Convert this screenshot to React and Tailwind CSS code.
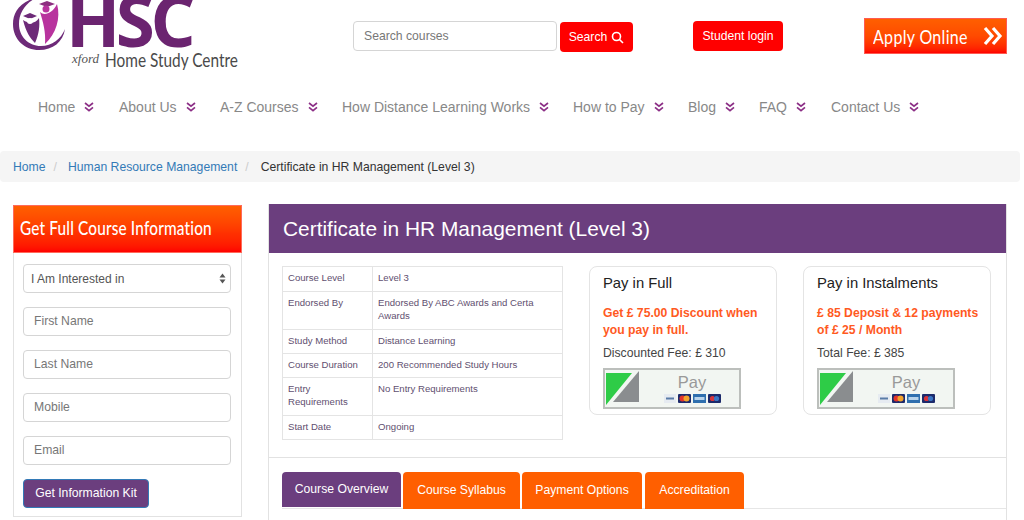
import React from "react";

const navItems = [
  { label: "Home", width: "w-[81px]" },
  { label: "About Us", width: "w-[101px]" },
  { label: "A-Z Courses", width: "w-[122px]" },
  { label: "How Distance Learning Works", width: "w-[231px]" },
  { label: "How to Pay", width: "w-[115px]" },
  { label: "Blog", width: "w-[71px]" },
  { label: "FAQ", width: "w-[72px]" },
  { label: "Contact Us", width: "w-[92px]" },
];

const courseRows = [
  ["Course Level", "Level 3", "h-[25px]"],
  ["Endorsed By", "Endorsed By ABC Awards and Certa Awards", "h-[38px]"],
  ["Study Method", "Distance Learning", "h-[24px]"],
  ["Course Duration", "200 Recommended Study Hours", "h-[24px]"],
  ["Entry Requirements", "No Entry Requirements", "h-[38px]"],
  ["Start Date", "Ongoing", "h-[24px]"],
];

const fieldClass =
  "mt-[14px] flex h-[29px] w-[208px] items-center rounded border border-[#d5d5d5] bg-white px-[10px] text-[12.2px] text-[#777]";

const Chevrons = () => (
  <svg width="10" height="10" viewBox="0 0 10 10" fill="none" stroke="#8c2f86" strokeWidth="1.7">
    <path d="M1 1 L5 4.2 L9 1" />
    <path d="M1 5.4 L5 8.6 L9 5.4" />
  </svg>
);

const LogoMark = () => (
  <svg width="62" height="52" viewBox="0 0 62 52" className="shrink-0">
    <path d="M22 -1 C8 4 3 14 3 24 C3 40 15 50 29 50 C43 50 53 42 55 29 C51 39 42 46 31 46 C18 46 9 36 9 24 C9 14 14 5 24 -1 Z" fill="#6d2a78" />
    <path d="M30 12 C34 16 42 14 47 4 C51 18 46 34 35 44 C36 32 33 22 30 12 Z" fill="#b8339e" />
    <path d="M29 4 L37 1 L45 4 L37 7 Z" fill="#8d2f80" />
    <circle cx="36" cy="9" r="3.5" fill="#b8339e" />
    <path d="M13 20 C16 32 20 38 25 43 C29 34 30 26 29 18 C25 24 19 24 13 20 Z" fill="#6d2a78" />
    <path d="M13 16 L20 13 L27 16 L20 19 Z" fill="#6d2a78" />
    <circle cx="20" cy="21" r="3" fill="#fff" />
  </svg>
);

const PayButton = () => (
  <div className="mt-[6px] flex h-[41px] w-[138px] items-start border-2 border-[#bcbfbc] bg-[#f2f6f2]">
    <svg width="40" height="37" viewBox="0 0 40 37" className="shrink-0">
      <path d="M1 3 H27 L1 35 Z" fill="#2ecc47" />
      <path d="M34 1 V32 H8 Z" fill="#8a8d8f" />
    </svg>
    <div className="flex w-[94px] flex-col items-center">
      <span className="h-[24px] text-[16.5px] leading-[24px] text-[#999]">Pay</span>
      <svg width="57" height="9" viewBox="0 0 57 9">
        <rect x="0" y="0" width="12" height="9" fill="#e6ebf1" />
        <rect x="2" y="3.5" width="8" height="2" fill="#5a7ca8" />
        <rect x="14" y="0" width="13" height="9" rx="1" fill="#1c2a6b" />
        <circle cx="18.5" cy="4.5" r="3" fill="#e2342a" />
        <circle cx="22.5" cy="4.5" r="3" fill="#f3a32b" />
        <rect x="29" y="0" width="13" height="9" fill="#2f6fae" />
        <rect x="30.5" y="3" width="10" height="3" fill="#b9d3ea" />
        <rect x="44" y="0" width="13" height="9" rx="1" fill="#1c2a6b" />
        <circle cx="48.5" cy="4.5" r="2.6" fill="#d8343a" />
        <circle cx="52.5" cy="4.5" r="2.6" fill="#3b76c4" />
      </svg>
    </div>
  </div>
);

const PayCard = ({ title, offer, fee }) => (
  <div className="ml-[26px] h-[149px] w-[188px] rounded-lg border border-[#e4e4e4] pl-[13px] pr-[8px] pt-[5px]">
    <h3 className="text-[14.8px] leading-[22px] text-[#222]">{title}</h3>
    <p className="mt-[11px] text-[12.2px] font-bold leading-[17.3px] text-[#ff5a1f]">{offer}</p>
    <p className="mt-[4px] text-[12.2px] leading-[18px] text-[#444]">{fee}</p>
    <PayButton />
  </div>
);

const App = () => {
  return (
    <div className="h-[520px] w-[1024px] overflow-hidden bg-white font-['Liberation_Sans',Arial,sans-serif]">
      <header className="flex h-[72px] items-start">
        <div className="ml-[10px] flex h-[72px] w-[343px] shrink-0 items-start overflow-hidden">
          <LogoMark />
          <div className="-ml-[6px] flex flex-col">
            <div className="-mt-[8px] h-[56px] font-['Open_Sans',sans-serif] text-[71px] font-bold leading-[56px] tracking-[-4.5px] text-[#6b2470]">
              HSC
            </div>
            <div className="ml-[6px] flex items-center">
              <span className="w-[33px] font-['Liberation_Serif',serif] text-[13px] italic leading-[22px] text-[#555]">xford</span>
              <span className="w-[133px] origin-left scale-x-[0.77] whitespace-nowrap font-['Lato',sans-serif] text-[20px] leading-[22px] text-[#4a4a4a]">Home Study Centre</span>
            </div>
          </div>
        </div>
        <div className="mt-[21px] flex h-[30px] w-[204px] items-center rounded border border-[#d5d5d5] px-[10px] text-[12.2px] text-[#777]">
          Search courses
        </div>
        <button className="ml-[3px] mt-[22px] flex h-[30px] w-[73px] items-center justify-center gap-[4px] rounded bg-[#ff0000] text-[12.2px] text-white">
          Search
          <svg width="13" height="13" viewBox="0 0 13 13" fill="none" stroke="#fff" strokeWidth="1.6">
            <circle cx="5.5" cy="5.5" r="4" />
            <path d="M8.5 8.5 L12 12" />
          </svg>
        </button>
        <button className="ml-[60px] mt-[21px] h-[30px] w-[90px] rounded bg-[#ff0000] text-[12.2px] text-white">
          Student login
        </button>
        <button className="ml-[81px] mt-[18px] flex h-[36px] w-[143px] items-center justify-between border border-[#ff5a50] bg-gradient-to-b from-[#ff5f00] via-[#ff4a00] to-[#ff0000] pl-[8px] pr-[3px] text-white">
          <span className="w-[96px] origin-left scale-x-[0.8] whitespace-nowrap text-left font-['Lato',sans-serif] text-[20px] tracking-[0.4px]">Apply Online</span>
          <svg width="20" height="20" viewBox="0 0 20 20" fill="none" stroke="#fff" strokeWidth="3.2">
            <path d="M2 2 L9 10 L2 18" />
            <path d="M10 2 L17 10 L10 18" />
          </svg>
        </button>
      </header>

      <nav className="flex h-[79px] pl-[38px] pt-[26px]">
        {navItems.map((item) => (
          <a key={item.label} className={`flex h-[18px] shrink-0 items-center gap-[9px] text-[14px] text-[#888] ${item.width}`}>
            <span className="whitespace-nowrap">{item.label}</span>
            <Chevrons />
          </a>
        ))}
      </nav>

      <div className="flex h-[31px] w-[1020px] items-center rounded bg-[#f5f5f5] pl-[13px] pt-[2px] text-[12.2px]">
        <span className="text-[#337ab7]">Home</span>
        <span className="px-[8px] text-[#ccc]">/</span>
        <span className="ml-[3px] text-[#337ab7]">Human Resource Management</span>
        <span className="px-[8px] text-[#ccc]">/</span>
        <span className="ml-[4px] text-[#333]">Certificate in HR Management (Level 3)</span>
      </div>

      <div className="mt-[22px] flex items-start">
        <aside className="ml-[13px] mt-[1px] w-[229px] shrink-0">
          <div className="flex h-[48px] items-center border border-[#ff6a5a] bg-gradient-to-b from-[#ff5f00] via-[#ff3000] via-60% to-[#ff0000] pl-[6px] text-white">
            <span className="w-[191px] origin-left scale-x-[0.83] whitespace-nowrap font-['Lato',sans-serif] text-[18.5px] font-medium tracking-[0.2px]">Get Full Course Information</span>
          </div>
          <div className="flex h-[264px] flex-col items-start border border-t-0 border-[#e2e2e2] px-[9px] pt-[11px]">
            <div className="flex h-[29px] w-[208px] items-center justify-between rounded border border-[#d5d5d5] bg-white pl-[7px] pr-[4px] text-[12px] text-[#555]">
              I Am Interested in
              <svg width="7" height="11" viewBox="0 0 7 11" fill="#555">
                <path d="M3.5 0.5 L6.5 4.5 H0.5 Z" />
                <path d="M3.5 10.5 L0.5 6.5 H6.5 Z" />
              </svg>
            </div>
            <div className={fieldClass}>First Name</div>
            <div className={fieldClass}>Last Name</div>
            <div className={fieldClass}>Mobile</div>
            <div className={fieldClass}>Email</div>
            <button className="mt-[14px] h-[29px] w-[126px] rounded border border-[#337ab7] bg-[#6b3e7e] text-[12.2px] text-white">
              Get Information Kit
            </button>
          </div>
        </aside>

        <main className="ml-[26px] h-[320px] w-[739px] shrink-0 border-x border-[#e2e2e2]">
          <h1 className="flex h-[49px] items-center bg-[#6b3e7e] pl-[14px] text-[20.9px] text-white">
            Certificate in HR Management (Level 3)
          </h1>
          <div className="flex h-[205px] border-b border-[#e2e2e2] pl-[13px] pt-[13px]">
            <table className="h-[173px] w-[281px] shrink-0 table-fixed border-collapse self-start text-[9.6px] leading-[13px] text-[#5f4f70]">
              <tbody>
                {courseRows.map(([label, value, height]) => (
                  <tr key={label} className={height}>
                    <td className="w-[90px] border border-[#e4e4e4] px-[5px] py-[4px] align-top">{label}</td>
                    <td className="border border-[#e4e4e4] px-[5px] py-[4px] align-top">{value}</td>
                  </tr>
                ))}
              </tbody>
            </table>
            <PayCard
              title="Pay in Full"
              offer="Get £ 75.00 Discount when you pay in full."
              fee="Discounted Fee: £ 310"
            />
            <PayCard
              title="Pay in Instalments"
              offer="£ 85 Deposit & 12 payments of £ 25 / Month"
              fee="Total Fee: £ 385"
            />
          </div>
          <div className="ml-[13px] mt-[14px] flex h-[37px] items-start gap-[2px] border-b border-[#e6e6e6] text-[12.2px] text-white">
            <div className="flex h-[35px] w-[119px] items-center justify-center rounded-t bg-[#6b3e7e]">Course Overview</div>
            <div className="-mb-[1px] flex h-[37px] w-[117px] items-center justify-center rounded-t bg-[#ff5f00]">Course Syllabus</div>
            <div className="-mb-[1px] flex h-[37px] w-[120px] items-center justify-center rounded-t bg-[#ff5f00]">Payment Options</div>
            <div className="-mb-[1px] ml-[1px] flex h-[37px] w-[99px] items-center justify-center rounded-t bg-[#ff5f00]">Accreditation</div>
          </div>
        </main>
      </div>
    </div>
  );
};

export default App;
